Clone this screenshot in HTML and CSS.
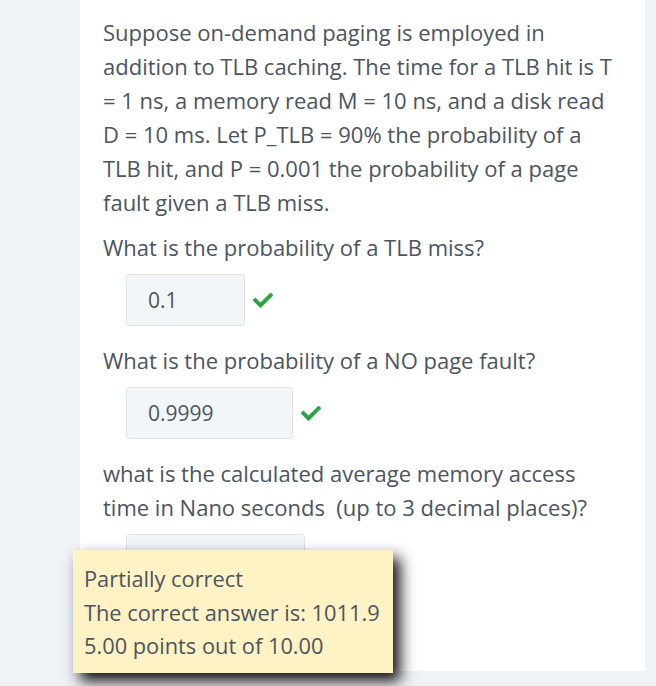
FILE: index.html
```html
<!DOCTYPE html>
<html lang="en">
<head>
  <meta charset="UTF-8">
  <meta name="viewport" content="width=device-width, initial-scale=1.0">
  <title>Question</title>
  <link rel="stylesheet" href="styles.css">
</head>
<body>

  <div class="page">
    <div class="card">
      <p class="qtext">Suppose on-demand paging is employed in addition to TLB caching. The time for a TLB hit is T = 1 ns, a memory read M = 10 ns, and a disk read D = 10 ms. Let P_TLB = 90% the probability of a TLB hit, and P = 0.001 the probability of a page fault given a TLB miss.</p>

      <div class="part">
        <p class="prompt">What is the probability of a TLB miss?</p>
        <div class="answer">
          <input type="text" class="field w1" value="0.1" readonly />
          <svg class="check" viewBox="0 72 512 378" width="20" height="15">
            <path d="M173.898 439.404l-166.4-166.4c-9.997-9.997-9.997-26.206 0-36.204l36.203-36.204c9.997-9.998 26.207-9.998 36.204 0L192 312.69 432.095 72.596c9.997-9.997 26.207-9.997 36.204 0l36.203 36.204c9.997 9.997 9.997 26.206 0 36.204l-294.4 294.401c-9.998 9.997-26.207 9.997-36.204-.001z"/>
          </svg>
        </div>
      </div>

      <div class="part">
        <p class="prompt">What is the probability of a NO page fault?</p>
        <div class="answer">
          <input type="text" class="field w2" value="0.9999" readonly />
          <svg class="check" viewBox="0 72 512 378" width="20" height="15">
            <path d="M173.898 439.404l-166.4-166.4c-9.997-9.997-9.997-26.206 0-36.204l36.203-36.204c9.997-9.998 26.207-9.998 36.204 0L192 312.69 432.095 72.596c9.997-9.997 26.207-9.997 36.204 0l36.203 36.204c9.997 9.997 9.997 26.206 0 36.204l-294.4 294.401c-9.998 9.997-26.207 9.997-36.204-.001z"/>
          </svg>
        </div>
      </div>

      <div class="part last">
        <p class="prompt">what is the calculated average memory access time in Nano seconds &nbsp;(up to 3 decimal places)?</p>
        <div class="answer">
          <input type="text" class="field w3" value="" readonly />
        </div>
      </div>

      <div class="feedback">
        <div>Partially correct</div>
        <div>The correct answer is: 1011.9</div>
        <div>5.00 points out of 10.00</div>
      </div>
    </div>
  </div>

</body>
</html>
```

FILE: styles.css
```css
body {
  margin: 0;
  background-color: #eff3f5;
  font-family: "Open Sans", "Liberation Sans", sans-serif;
  color: #4b5560;
}

.page {
  padding: 0 11px 16px 80px;
}

.card {
  position: relative;
  background-color: #fff;
  padding: 15px 30px 85px 23px;
}

p {
  margin: 0;
}

.qtext {
  font-size: 22px;
  line-height: 34px;
  margin-bottom: 11px;
}

.prompt {
  font-size: 22px;
  line-height: 34px;
}

.part {
  margin-bottom: 17px;
}

.part.last {
  margin-bottom: 0;
}

.answer {
  display: flex;
  align-items: center;
  margin-top: 10px;
  padding-left: 23px;
}

.field {
  box-sizing: border-box;
  height: 52px;
  padding: 0 0 0 21px;
  border: 1.5px solid #dfe4e8;
  border-radius: 4px;
  background-color: #f3f6f9;
  font-family: "Open Sans", "Liberation Sans", sans-serif;
  font-size: 21px;
  color: #4b5560;
  outline: none;
}

.w1 { width: 119px; }
.w2 { width: 167px; }
.w3 { width: 179px; }

.check {
  fill: #2ea344;
  margin-left: 8px;
}

.feedback {
  position: absolute;
  left: -7px;
  top: 550px;
  width: 320px;
  box-sizing: border-box;
  padding: 12px 11px 10px;
  background-color: #fff2c4;
  font-size: 21.8px;
  line-height: 33.5px;
  box-shadow: 7px 8px 14px rgba(0, 0, 0, 0.95);
}
```
